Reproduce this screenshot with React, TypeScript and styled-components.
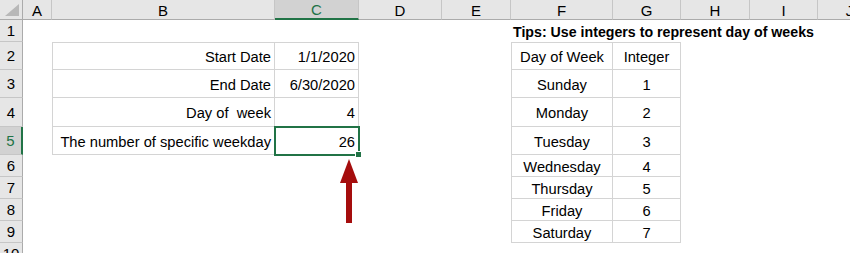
import React from "react";
import styled, { createGlobalStyle } from "styled-components";

const GlobalStyle = createGlobalStyle`
  html, body {
    margin: 0;
    padding: 0;
    background: #ffffff;
    overflow: hidden;
  }
  body {
    font-family: "Liberation Sans", Arial, sans-serif;
  }
`;

const colWidths = [23, 29, 223, 84, 83, 69, 102, 68, 69, 68, 64];
const colNames = ["", "A", "B", "C", "D", "E", "F", "G", "H", "I", "J"];
const rowHeights = [20, 22, 28, 28, 29, 28, 22, 22, 22, 22, 22];

const activeCol = "C";
const activeRow = 5;

type CellData = {
  text: string;
  align?: "left" | "right" | "center";
  bold?: boolean;
  bottom?: boolean;
};

const cells: Record<string, CellData> = {
  B2: { text: "Start Date", align: "right" },
  C2: { text: "1/1/2020", align: "right" },
  B3: { text: "End Date", align: "right" },
  C3: { text: "6/30/2020", align: "right" },
  B4: { text: "Day of  week", align: "right" },
  C4: { text: "4", align: "right" },
  B5: { text: "The number of specific weekday", align: "right" },
  C5: { text: "26", align: "right" },
  F1: { text: "Tips: Use integers to represent day of weeks", bold: true, bottom: true },
  F2: { text: "Day of Week", align: "center" },
  G2: { text: "Integer", align: "center" },
};

const days = ["Sunday", "Monday", "Tuesday", "Wednesday", "Thursday", "Friday", "Saturday"];
days.forEach((d, i) => {
  cells["F" + (i + 3)] = { text: d, align: "center" };
  cells["G" + (i + 3)] = { text: String(i + 1), align: "center" };
});

// cells inside the two bordered tables
const inTable = (col: string, row: number) => {
  if ((col === "B" || col === "C") && row >= 2 && row <= 5) return true;
  if ((col === "F" || col === "G") && row >= 2 && row <= 9) return true;
  return false;
};

const Sheet = styled.div`
  position: relative;
  display: grid;
  grid-template-columns: ${colWidths.map((w) => w + "px").join(" ")};
  grid-template-rows: ${rowHeights.map((h) => h + "px").join(" ")};
  width: ${colWidths.reduce((a, b) => a + b, 0)}px;
  font-size: 14.7px;
  color: #000;
`;

const Corner = styled.div`
  background: #e6e6e6;
  border-right: 1px solid #ababab;
  border-bottom: 1px solid #ababab;
  box-sizing: border-box;
  display: flex;
  align-items: flex-end;
  justify-content: flex-end;
  padding: 0 3px 3px 0;
`;

const ColHeader = styled.div<{ $active?: boolean }>`
  box-sizing: border-box;
  background: ${(p) => (p.$active ? "#d2d2d2" : "#e6e6e6")};
  color: ${(p) => (p.$active ? "#217346" : "#000")};
  border-right: 1px solid #c6c6c6;
  border-bottom: ${(p) => (p.$active ? "2px solid #217346" : "1px solid #ababab")};
  display: flex;
  align-items: center;
  justify-content: center;
  font-size: 15px;
  padding-top: 1px;
`;

const RowHeader = styled.div<{ $active?: boolean }>`
  box-sizing: border-box;
  background: ${(p) => (p.$active ? "#d2d2d2" : "#e6e6e6")};
  color: ${(p) => (p.$active ? "#217346" : "#000")};
  border-right: ${(p) => (p.$active ? "2px solid #217346" : "1px solid #ababab")};
  border-bottom: 1px solid #c6c6c6;
  display: flex;
  align-items: center;
  justify-content: center;
  font-size: 15px;
`;

const Cell = styled.div<{
  $align: string;
  $bold?: boolean;
  $bottom?: boolean;
  $bt?: boolean;
  $bl?: boolean;
  $framed?: boolean;
  $selected?: boolean;
}>`
  position: relative;
  box-sizing: border-box;
  display: flex;
  align-items: ${(p) => (p.$bottom ? "flex-end" : "center")};
  justify-content: ${(p) =>
    p.$align === "right" ? "flex-end" : p.$align === "center" ? "center" : "flex-start"};
  padding: ${(p) => (p.$bottom ? "0 2px 2px 2px" : "2px 3px 0 3px")};
  white-space: pre;
  font-size: ${(p) => (p.$bold ? "14.2px" : "inherit")};
  font-weight: ${(p) => (p.$bold ? 700 : 400)};
  border-right: ${(p) => (p.$framed ? "1px solid #d4d4d4" : "none")};
  border-bottom: ${(p) => (p.$framed ? "1px solid #d4d4d4" : "none")};
  border-top: ${(p) => (p.$bt ? "1px solid #d4d4d4" : "none")};
  border-left: ${(p) => (p.$bl ? "1px solid #d4d4d4" : "none")};
  overflow: visible;
  z-index: ${(p) => (p.$bold ? 1 : 0)};
  ${(p) =>
    p.$selected &&
    `
    outline: 2px solid #217346;
    outline-offset: -1px;
    z-index: 2;
    &::after {
      content: "";
      position: absolute;
      right: -4px;
      bottom: -4px;
      width: 5px;
      height: 5px;
      background: #217346;
      border: 1px solid #fff;
    }
  `}
`;

const Arrow = styled.svg`
  position: absolute;
  left: 339px;
  top: 158px;
`;

const CornerMark = () => (
  <svg width="14" height="12" viewBox="0 0 14 12">
    <polygon points="14,0 14,12 0,12" fill="#b8b8b8" />
  </svg>
);

const App = () => {
  const items: React.ReactNode[] = [];

  rowHeights.forEach((_, r) => {
    colNames.forEach((col, c) => {
      const key = `${r}-${c}`;
      if (r === 0 && c === 0) {
        items.push(
          <Corner key={key}>
            <CornerMark />
          </Corner>
        );
      } else if (r === 0) {
        items.push(
          <ColHeader key={key} $active={col === activeCol}>
            {col}
          </ColHeader>
        );
      } else if (c === 0) {
        items.push(
          <RowHeader key={key} $active={r === activeRow}>
            {r}
          </RowHeader>
        );
      } else {
        const data = cells[col + r];
        const framed = inTable(col, r);
        items.push(
          <Cell
            key={key}
            $align={data?.align ?? "left"}
            $bold={data?.bold}
            $bottom={data?.bottom}
            $framed={framed}
            $bt={framed && !inTable(col, r - 1)}
            $bl={framed && !inTable(colNames[c - 1], r)}
            $selected={col === activeCol && r === activeRow}
          >
            {data?.text}
          </Cell>
        );
      }
    });
  });

  return (
    <>
      <GlobalStyle />
      <Sheet>
        {items}
        <Arrow width="20" height="66" viewBox="0 0 20 66">
          <polygon points="10,1 19,25 1,25" fill="#a50d0d" />
          <rect x="7" y="24" width="6" height="41" fill="#a50d0d" />
        </Arrow>
      </Sheet>
    </>
  );
};

export default App;
